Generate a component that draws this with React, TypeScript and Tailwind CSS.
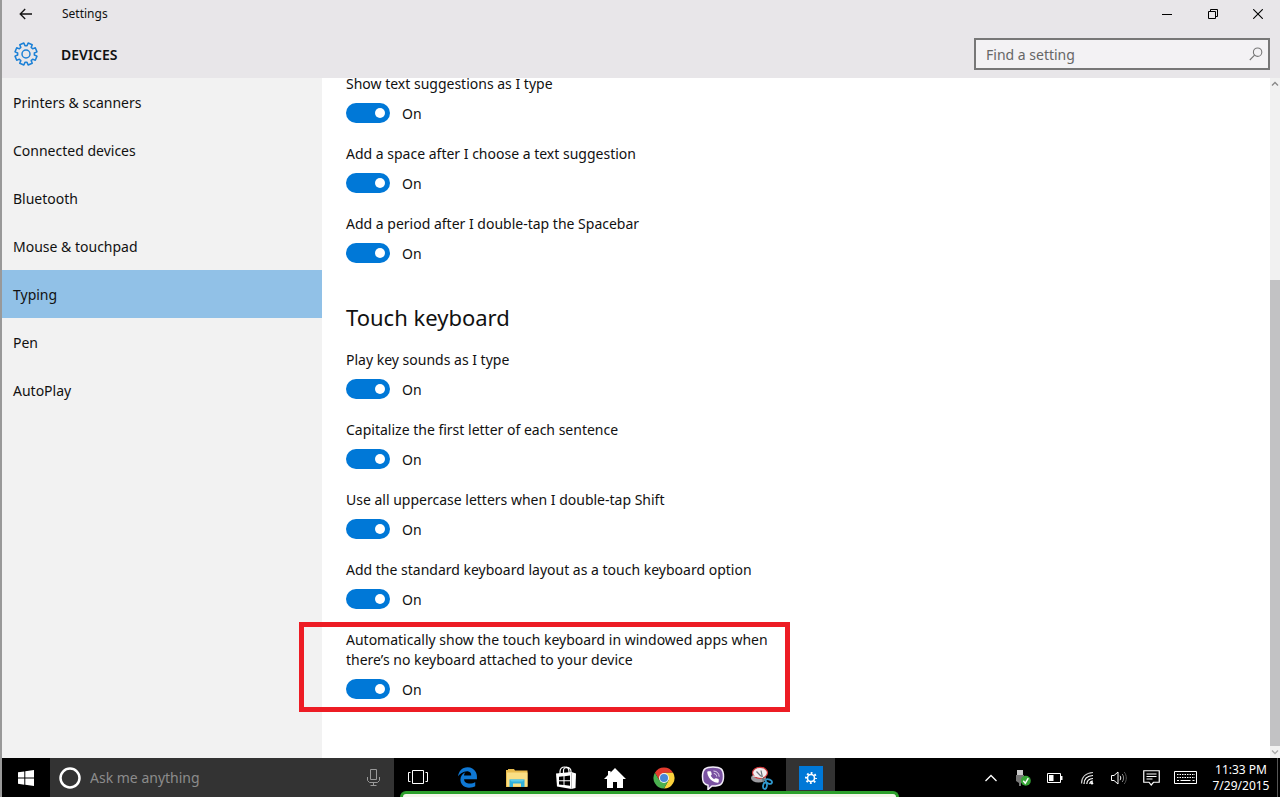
import { useId, useState } from "react";
import { FaEdgeLegacy } from "react-icons/fa";

const navItems = [
  "Printers & scanners",
  "Connected devices",
  "Bluetooth",
  "Mouse & touchpad",
  "Typing",
  "Pen",
  "AutoPlay",
];

const typingOptions = [
  "Show text suggestions as I type",
  "Add a space after I choose a text suggestion",
  "Add a period after I double-tap the Spacebar",
];

const keyboardOptions = [
  "Play key sounds as I type",
  "Capitalize the first letter of each sentence",
  "Use all uppercase letters when I double-tap Shift",
  "Add the standard keyboard layout as a touch keyboard option",
];

// eight rounded teeth around the origin
const gearPath = (outer: number, inner: number) => {
  const points: string[] = [];
  for (let i = 0; i < 8; i++) {
    const mid = ((i + 0.5) * Math.PI) / 4;
    [
      [-0.27, inner],
      [-0.2, outer],
      [0.2, outer],
      [0.27, inner],
    ].forEach(([a, r]) => {
      points.push(
        `${(r * Math.sin(mid + a)).toFixed(2)} ${(-r * Math.cos(mid + a)).toFixed(2)}`
      );
    });
  }
  return `M${points.join("L")}Z`;
};

const Toggle = ({ label }: { label: string }) => {
  const id = useId();
  const [on, setOn] = useState(true);
  return (
    <div className="flex flex-col gap-[9px]">
      <label htmlFor={id} className="leading-5">
        {label}
      </label>
      <div className="flex items-center gap-3 h-5">
        <input
          id={id}
          type="checkbox"
          checked={on}
          onChange={() => setOn(!on)}
          className="appearance-none w-11 h-5 rounded-full bg-[#999] checked:bg-[#0078d7] flex items-center px-[5px] checked:justify-end before:block before:w-[10px] before:h-[10px] before:rounded-full before:bg-white"
        />
        <span>{on ? "On" : "Off"}</span>
      </div>
    </div>
  );
};

const Header = () => {
  return (
    <header className="bg-[#e8e6e9]">
      <div className="h-7 flex items-center">
        <button aria-label="Back" className="w-12 h-7 flex items-center justify-center">
          <svg width="14" height="12" viewBox="0 0 14 12" fill="none" stroke="#111" strokeWidth="1.3">
            <path d="M13 6H1.200M6.200 1 1.200 6l5 5" />
          </svg>
        </button>
        <span className="pl-3 text-[12px]">Settings</span>
        <div className="ml-auto flex h-7">
          <button aria-label="Minimize" className="w-[46px] flex items-center justify-center">
            <svg width="10" height="10" viewBox="0 0 10 10" stroke="#000">
              <path d="M0 5.500h10" />
            </svg>
          </button>
          <button aria-label="Restore" className="w-[46px] flex items-center justify-center">
            <svg width="10" height="10" viewBox="0 0 10 10" fill="none" stroke="#000">
              <path d="M.5 2.500h7v7h-7zM2.500 2.500v-2h7v7h-2" />
            </svg>
          </button>
          <button aria-label="Close" className="w-11 flex items-center justify-center">
            <svg width="10" height="10" viewBox="0 0 10 10" stroke="#000" strokeWidth="1.100">
              <path d="M.2.200l9.600 9.600M9.800.200.200 9.800" />
            </svg>
          </button>
        </div>
      </div>
      <div className="flex items-center pt-[10px] pb-2 pl-3 pr-[10px]">
        <svg width="24" height="24" viewBox="-12 -12 24 24" fill="none" stroke="#1c80d6" strokeWidth="1.500" strokeLinejoin="round">
          <path d={gearPath(11.2, 8.4)} />
          <circle r="4" />
        </svg>
        <h1 className="pl-[23px] text-[14px] font-semibold">DEVICES</h1>
        <div className="ml-auto w-[296px] h-8 border-2 border-[#777] bg-[#f3f2f4] flex items-center pl-[10px] pr-[5px]">
          <input
            type="text"
            aria-label="Find a setting"
            placeholder="Find a setting"
            className="flex-1 min-w-0 bg-transparent outline-none placeholder:text-[#666]"
          />
          <svg width="14" height="14" viewBox="0 0 14 14" fill="none" stroke="#777" strokeWidth="1.100">
            <circle cx="8.600" cy="5.200" r="4.200" />
            <path d="M5.600 8.200.8 13" />
          </svg>
        </div>
      </div>
    </header>
  );
};

const SideNav = () => {
  return (
    <nav className="w-80 shrink-0 bg-[#f2f2f2]">
      {navItems.map((item) => (
        <a
          key={item}
          href="#"
          className={`flex items-center h-12 pl-[11px] ${item === "Typing" ? "bg-[#91c1e7]" : ""}`}
        >
          {item}
        </a>
      ))}
    </nav>
  );
};

const ScrollBar = () => {
  return (
    <div className="w-[10px] shrink-0 bg-[#f1f1f1] flex flex-col items-center">
      <svg className="h-3 shrink-0" width="8" height="12" viewBox="0 0 8 12" fill="none" stroke="#888" strokeWidth="1.300">
        <path d="M1 7.500l3-3 3 3" />
      </svg>
      <div className="flex-[29]" />
      <div className="flex-[71] w-full bg-[#c2c2c4]" />
      <svg className="h-3 shrink-0" width="8" height="12" viewBox="0 0 8 12" fill="none" stroke="#aaa" strokeWidth="1.300">
        <path d="M1 4.500l3 3 3-3" />
      </svg>
    </div>
  );
};

const ExplorerIcon = () => (
  <svg width="22" height="20" viewBox="0 0 22 20">
    <path d="M0 2h2V1h6l1 1.500h12.500V19H0z" fill="#e9bc4e" />
    <path d="M1 4.500h20.500V18.500H1z" fill="#fadf84" />
    <path d="M3.500 11.500h15V19h-3.500v-3.500H7V19H3.500z" fill="#2fb0dc" />
    <path d="M3.500 11.500h15l-2 2h-11z" fill="#5ccbe8" />
  </svg>
);

const StoreIcon = () => (
  <svg width="22" height="24" viewBox="0 0 22 24">
    <path d="M5 8V5.500C5 2.500 7 1 9.500 1S14 2.500 14 5.500V7M8.500 7V4.500C8.500 2.500 10 1.300 12 1.300s4 1.700 4 4.200V7" fill="none" stroke="#fff" strokeWidth="1.200" />
    <path d="M1 7.500 16.500 6v17L2 20.500z" fill="#fff" />
    <path d="M16.500 6 21 7.500 20.500 22l-4 1z" fill="#fff" />
    <path d="M4 10.800l4.500-.5v3.900H4zM9.500 10.200l5.500-.6v4.600H9.500zM4 15.200h4.500V19L4 18.400zM9.500 15.200H15v4.500l-5.500-.6z" fill="#000" />
  </svg>
);

const ChromeIcon = () => (
  <svg width="22" height="22" viewBox="-11 -11 22 22">
    <path d="M-9.100-5.250A10.500 10.500 0 0 1 9.100-5.250H0L-4.500 2.600z" fill="#e33b2e" />
    <path d="M9.100-5.250A10.500 10.500 0 0 1 0 10.500L4.500 2.600 0-5.250z" fill="#fbd23c" />
    <path d="M0 10.500A10.500 10.500 0 0 1-9.100-5.250L-4.500 2.600H4.500z" fill="#4bb04f" />
    <circle r="5" fill="#f4f4f4" />
    <circle r="4" fill="#4787d8" />
  </svg>
);

const ViberIcon = () => (
  <svg width="24" height="24" viewBox="0 0 24 24">
    <path d="M12 1c7.500 0 10.500 2 10.500 9.500S19.500 20 12 20h-1l-4 3.500V19.300C2.500 18 1.500 15.500 1.500 10.500 1.500 3 4.500 1 12 1z" fill="#7a52a2" stroke="#f3eef8" strokeWidth="1.500" />
    <path
      transform="translate(5 4) scale(.58)"
      d="M22 16.920v3a2 2 0 0 1-2.180 2 19.800 19.800 0 0 1-8.630-3.070 19.500 19.500 0 0 1-6-6A19.800 19.800 0 0 1 2.120 4.180 2 2 0 0 1 4.110 2h3a2 2 0 0 1 2 1.720c.13.960.360 1.900.700 2.810a2 2 0 0 1-.45 2.110L8.090 9.910a16 16 0 0 0 6 6l1.270-1.270a2 2 0 0 1 2.110-.45c.910.340 1.850.570 2.810.700A2 2 0 0 1 22 16.920z"
      fill="#fff"
    />
    <path d="M12.500 5c3.500.2 5.500 2.200 5.700 5.700M12.800 7.500c1.800.2 2.700 1.200 2.900 3" fill="none" stroke="#e5d9f0" strokeWidth="1" />
  </svg>
);

const SnippingIcon = () => (
  <svg width="22" height="24" viewBox="0 0 22 24">
    <ellipse cx="7.500" cy="12" rx="7.500" ry="4.500" fill="#9b9b9f" />
    <ellipse cx="9" cy="6.800" rx="7.500" ry="5.500" fill="#f3eff1" stroke="#d0393c" strokeWidth="1.200" />
    <path d="M5.500 5.500 14.500 15M10 4.500l2.500 12" stroke="#6b717a" strokeWidth="1.200" />
    <path d="M2 10l10 1.500" stroke="#eee" strokeWidth="1.200" />
    <ellipse cx="17.800" cy="15.500" rx="3.400" ry="2" transform="rotate(25 17.800 15.500)" fill="none" stroke="#2f98ce" strokeWidth="1.800" />
    <ellipse cx="14" cy="19.800" rx="1.900" ry="3.200" transform="rotate(10 14 19.800)" fill="none" stroke="#2f98ce" strokeWidth="1.800" />
  </svg>
);

const apps = [
  {
    name: "Task View",
    icon: (
      <svg width="21" height="15" viewBox="0 0 21 15" fill="none" stroke="#fff">
        <path d="M4.500.5h11v13h-11zM2.500 2.500h-2v9h2M17.500 2.500h2v9h-2" />
      </svg>
    ),
  },
  { name: "Edge", icon: <FaEdgeLegacy size={21} color="#0f78d4" /> },
  { name: "File Explorer", icon: <ExplorerIcon /> },
  { name: "Store", icon: <StoreIcon /> },
  {
    name: "Home",
    icon: (
      <svg width="22" height="20" viewBox="0 0 22 20" fill="#fff">
        <path d="M11 0 22 11h-3v9h-6v-6H9v6H3v-9H0L4 7V3h2.500v1.500z" />
      </svg>
    ),
  },
  { name: "Chrome", icon: <ChromeIcon /> },
  { name: "Viber", icon: <ViberIcon /> },
  { name: "Snipping Tool", icon: <SnippingIcon /> },
  {
    name: "Settings",
    icon: (
      <span className="w-6 h-6 bg-[#0078d7] flex items-center justify-center">
        <svg width="14" height="14" viewBox="-7 -7 14 14" fill="none" stroke="#fff">
          <circle r="3.500" strokeWidth="1.600" />
          <circle r="5" strokeWidth="2" strokeDasharray="1.800 2.127" strokeDashoffset="0.900" />
        </svg>
      </span>
    ),
  },
];

const trayIcons = [
  {
    name: "Show hidden icons",
    icon: (
      <svg width="12" height="8" viewBox="0 0 12 8" fill="none" stroke="#fff" strokeWidth="1.300">
        <path d="M.5 7 6 1.500 11.500 7" />
      </svg>
    ),
  },
  {
    name: "Safely remove hardware",
    icon: (
      <svg width="16" height="16" viewBox="0 0 16 16">
        <path d="M2 0h6v5H2z" fill="#c9c9c9" />
        <path d="M1 5h8v6l-3 2v3H4v-3l-3-2z" fill="#777" />
        <circle cx="10.800" cy="10.700" r="5" fill="#35a535" />
        <path d="M8.300 10.700l2 2.500 3-5" fill="none" stroke="#fff" strokeWidth="1.400" />
      </svg>
    ),
  },
  {
    name: "Battery",
    icon: (
      <svg width="16" height="10" viewBox="0 0 16 10">
        <path d="M.5.500h13v9h-13z" fill="none" stroke="#fff" />
        <path d="M2 2h4.500v6H2zM14 3h1.500v4H14z" fill="#fff" />
      </svg>
    ),
  },
  {
    name: "Network",
    icon: (
      <svg width="14" height="14" viewBox="0 0 14 14" fill="none" stroke="#fff" strokeWidth="1.200">
        <path d="M1.500 12.500C1.500 6 6 2 13 1.500" stroke="#ccc" />
        <path d="M4 13C4 8 7.500 4.800 13 4.500M6.800 13c0-3.300 2.500-5.200 6.200-5.500" />
        <path d="M9.800 13c0-1.800 1.200-2.800 3.200-3" />
        <circle cx="12" cy="12.200" r="1.200" fill="#fff" stroke="none" />
      </svg>
    ),
  },
  {
    name: "Volume",
    icon: (
      <svg width="16" height="14" viewBox="0 0 16 14" fill="none" stroke="#fff">
        <path d="M.5 4.500H3l4-3.500v12L3 9.500H.5z" />
        <path d="M9 4.800c1 1.300 1 3.100 0 4.400" />
        <path d="M11.200 3c1.900 2.300 1.900 5.700 0 8" stroke="#888" />
        <path d="M13.200 1c2.800 3.400 2.800 8.600 0 12" stroke="#555" />
      </svg>
    ),
  },
  {
    name: "Notifications",
    icon: (
      <svg width="17" height="16" viewBox="0 0 17 16" fill="none" stroke="#fff" strokeWidth="1.200">
        <path d="M.75.750h15.500v11.500H10.500L8.200 15l-2.200-2.750H.75z" />
        <path d="M3.500 4h10M3.500 6.500h10M3.500 9h6" />
      </svg>
    ),
  },
];

const TaskBar = () => {
  return (
    <footer className="relative h-[39px] shrink-0 bg-black text-white flex">
      <button aria-label="Start" className="w-12 flex items-center justify-center">
        <svg width="16" height="16" viewBox="0 0 16 16" fill="#fff">
          <path d="M0 2.300 6.300 1.400v6.200H0zM7.300 1.200 16 0v7.600H7.300zM0 8.500h6.300v6.200L0 13.800zM7.300 8.500H16V16l-8.700-1.200z" />
        </svg>
      </button>
      <div className="w-[344px] bg-[#333] flex items-center pl-2 pr-[14px]">
        <svg width="24" height="24" viewBox="0 0 24 24" fill="none" stroke="#fff" strokeWidth="2.500">
          <circle cx="12" cy="12" r="9.500" />
        </svg>
        <input
          type="text"
          aria-label="Ask me anything"
          placeholder="Ask me anything"
          className="flex-1 min-w-0 pl-2 bg-transparent outline-none placeholder:text-[#8c8c8c]"
        />
        <svg width="13" height="17" viewBox="0 0 13 17" fill="none" stroke="#999">
          <path d="M3.500.5h6v10h-6zM.5 8v3.500l2 2h8l2-2V8M6.500 13.500v3M3.500 16.500h6" />
        </svg>
      </div>
      {apps.map((app) => (
        <button
          key={app.name}
          aria-label={app.name}
          className={`w-[49px] flex items-center justify-center ${app.name === "Settings" ? "bg-[#333]" : ""}`}
        >
          {app.icon}
        </button>
      ))}
      <div className="ml-auto flex">
        {trayIcons.map((item) => (
          <button key={item.name} aria-label={item.name} className="w-8 flex items-center justify-center">
            {item.icon}
          </button>
        ))}
        <button aria-label="Touch keyboard" className="w-[38px] flex items-center justify-center">
          <svg width="24" height="14" viewBox="0 0 24 14" fill="none" stroke="#fff">
            <path d="M.5.5h22v12H.5z" />
            <path d="M3 3.500h18M3 6.500h18" strokeDasharray="1.500 1" />
            <path d="M3 9.500h2M6.500 9.500h10M18.500 9.500h2" />
          </svg>
        </button>
        <div className="w-[73px] flex flex-col justify-center text-center text-[12px] leading-4 border-r border-[#555] mr-[2px]">
          <span>11:33 PM</span>
          <span>7/29/2015</span>
        </div>
      </div>
      {/* top edge of the window behind the bar */}
      <div className="absolute left-[398px] bottom-0 w-[499px] h-[6px] rounded-t-md border-t-3 border-x-3 border-[#2ca02c] bg-[#f5f5ec]" />
    </footer>
  );
};

const App = () => {
  return (
    <div className="h-screen flex flex-col overflow-hidden border-l-2 border-[#999] bg-white text-[14px] text-[#111] font-['Noto_Sans','Open_Sans',sans-serif]">
      <Header />
      <div className="flex-1 min-h-0 flex">
        <SideNav />
        <main className="flex-1 min-w-0 overflow-x-visible overflow-y-clip pl-6">
          <div className="-mt-1 flex flex-col gap-[21px]">
            {typingOptions.map((label) => (
              <Toggle key={label} label={label} />
            ))}
          </div>
          <h2 className="pt-[38px] pb-[17px] text-[22px] leading-8">Touch keyboard</h2>
          <div className="flex flex-col gap-[21px]">
            {keyboardOptions.map((label) => (
              <Toggle key={label} label={label} />
            ))}
            <div className="relative w-[444px]">
              <Toggle label="Automatically show the touch keyboard in windowed apps when there’s no keyboard attached to your device" />
              <div className="absolute -left-[47px] right-0 -top-2 -bottom-[13px] border-5 border-[#ed1c24] pointer-events-none" />
            </div>
          </div>
        </main>
        <ScrollBar />
      </div>
      <TaskBar />
    </div>
  );
};

export default App;
